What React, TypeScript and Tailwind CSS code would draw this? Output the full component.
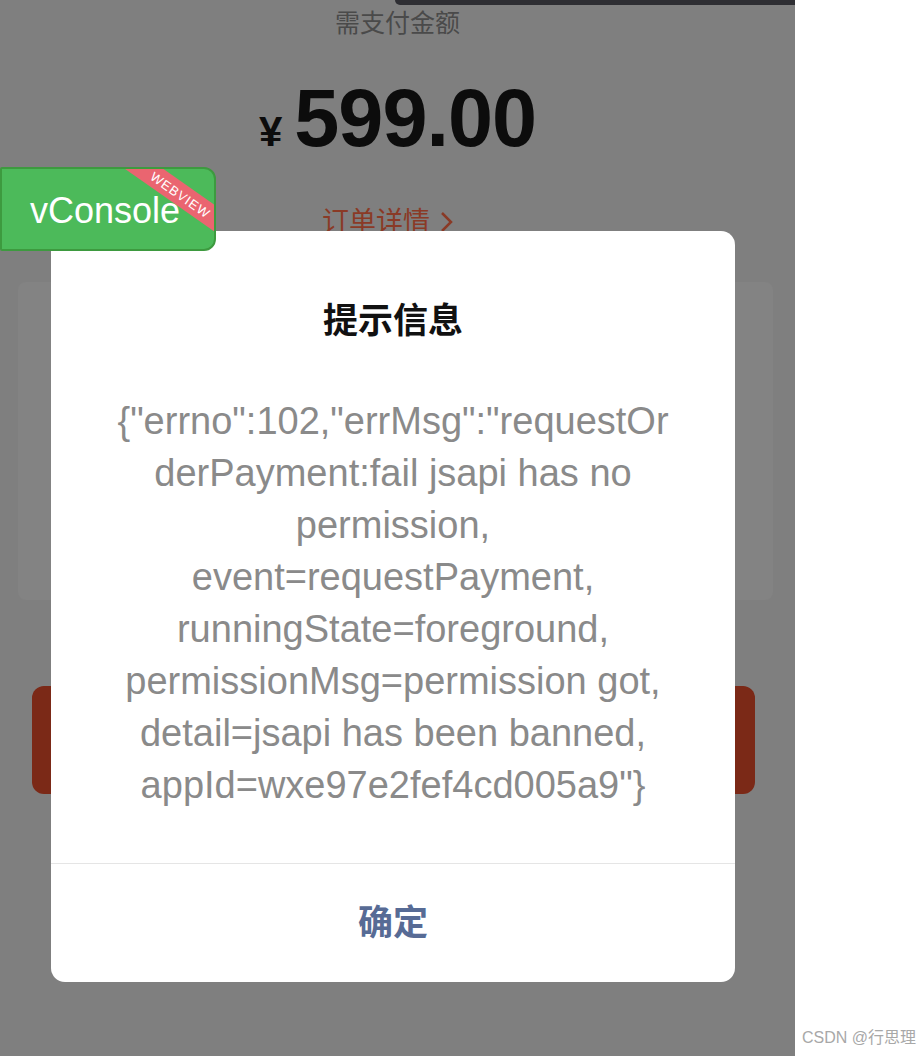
import React from 'react';

const lines = [
  '{"errno":102,"errMsg":"requestOr',
  'derPayment:fail jsapi has no',
  'permission,',
  'event=requestPayment,',
  'runningState=foreground,',
  'permissionMsg=permission got,',
  'detail=jsapi has been banned,',
  'appId=wxe97e2fef4cd005a9"}',
];

const font = { fontFamily: '"Liberation Sans", "Noto Sans CJK SC", sans-serif' };

export default function App() {
  return (
    <div className="flex h-[1056px] w-[920px] bg-white" style={font}>
      {/* phone screen, already dimmed by the mask */}
      <div className="relative h-full w-[795px] overflow-hidden bg-[#7f7f7f]">
        <div className="absolute right-0 top-0 h-[5px] w-[400px] rounded-bl-[6px] bg-[#2e2e33]" />

        {/* page under the mask */}
        <div className="flex flex-col items-center">
          <div className="mt-[8px] text-[25px] leading-[30px] text-[#4a4a4a]">需支付金额</div>
          <div className="mt-[34px] flex items-baseline text-[#0c0c0c]">
            <span className="mr-[12px] text-[42px] font-bold">¥</span>
            <span className="text-[81px] font-bold leading-[92px] tracking-[-1px]">599.00</span>
          </div>
          <div className="mr-[20px] mt-[43px] flex items-center gap-[10px] text-[27px] leading-[30px] text-[#8a3a26]">
            订单详情
            <svg width="13" height="22" viewBox="0 0 13 22" fill="none">
              <path d="M2 2l9 9-9 9" stroke="#8a3a26" strokeWidth="2.5" />
            </svg>
          </div>
          <div className="ml-[18px] mt-[45px] h-[318px] w-[755px] self-start rounded-[8px] bg-[#838383]" />
          <div className="ml-[32px] mt-[86px] h-[108px] w-[723px] self-start rounded-[12px] bg-[#7b2917]" />
        </div>

        {/* dialog */}
        <div className="absolute left-[51px] top-[231px] flex h-[751px] w-[684px] flex-col rounded-[14px] bg-white">
          <div className="pt-[68px] text-center text-[35px] font-bold leading-[44px] text-[#111]">提示信息</div>
          <div className="mt-[52px] flex flex-col items-center text-[38px] leading-[52px] text-[#8a8a8a]">
            {lines.map((l) => (
              <div key={l}>{l}</div>
            ))}
          </div>
          <div className="mt-auto flex h-[119px] items-center justify-center border-t border-[#e5e5e5] text-[35px] font-bold text-[#576b95]">
            确定
          </div>
        </div>

        {/* vConsole switch */}
        <div className="absolute left-0 top-[167px] flex h-[84px] w-[216px] items-center justify-center overflow-hidden rounded-l-[2px] rounded-r-[12px] border-2 border-[#3d9a3f] bg-[#4cba5a] pr-[6px] pt-[4px]">
          <span className="text-[36px] text-white">vConsole</span>
          {/* ribbon band */}
          <div className="absolute left-[108px] top-[14px] h-[22px] w-[140px] rotate-[35deg] bg-[#ea6570]" />
          <span className="absolute left-[144px] top-[17px] w-[64px] rotate-[35deg] text-center text-[13px] leading-[15px] tracking-[1px] text-white">
            WEBVIEW
          </span>
        </div>
      </div>

      <div className="flex flex-1 items-end justify-end pb-[6px] pr-[4px]">
        <span className="whitespace-nowrap text-[16px] text-[#a8a8a8]">CSDN @行思理</span>
      </div>
    </div>
  );
}
